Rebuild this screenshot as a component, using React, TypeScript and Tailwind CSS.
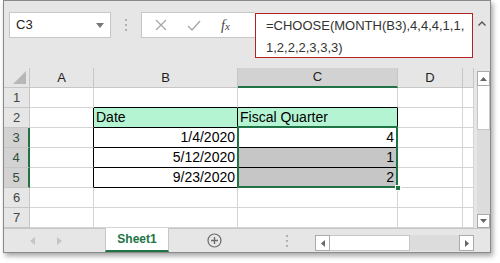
import React from "react";

const F = { fontFamily: '"Liberation Sans", Arial, sans-serif' };

function Corner() {
  return (
    <div className="w-[26px] h-full border-r border-b border-[#c6c6c6] bg-[#e6e6e6] relative flex items-end justify-end pr-[3px] pb-[3px]">
      <svg width="13" height="13" viewBox="0 0 13 13">
        <polygon points="13,0 13,13 0,13" fill="#b7b7b7" />
      </svg>
    </div>
  );
}

const colW = ["w-[64px]", "w-[144px]", "w-[160px]", "w-[65px]", "w-[11px]"];

function ColHeader() {
  const labels = ["A", "B", "C", "D", ""];
  return (
    <div className="flex h-[20px]">
      <Corner />
      {labels.map((l, i) => (
        <div
          key={i}
          className={`${colW[i]} h-full flex items-center justify-center text-[13px] text-[#222] border-r border-[#c6c6c6] ${
            i === 2 ? "bg-[#d2d2d2] border-b-2 border-b-[#217346]" : "bg-[#e6e6e6] border-b border-b-[#c6c6c6]"
          }`}
        >
          {l}
        </div>
      ))}
    </div>
  );
}

type Row = {
  n: number;
  b?: string;
  c?: string;
  hdr?: boolean;
  sel?: boolean;
  gray?: boolean;
};

const rows: Row[] = [
  { n: 1 },
  { n: 2, b: "Date", c: "Fiscal Quarter", hdr: true },
  { n: 3, b: "1/4/2020", c: "4", sel: true },
  { n: 4, b: "5/12/2020", c: "1", sel: true, gray: true },
  { n: 5, b: "9/23/2020", c: "2", sel: true, gray: true },
  { n: 6 },
  { n: 7 },
];

function GridRow({ r }: { r: Row }) {
  const inTable = r.n >= 2 && r.n <= 5;
  const aboveTable = r.n === 1;
  const grid = "border-[#d4d4d4]";
  return (
    <div className="flex h-[20px]">
      <div
        className={`w-[26px] h-full flex items-center justify-center text-[13px] border-b border-[#c6c6c6] ${
          r.sel
            ? "bg-[#d2d2d2] text-[#2f4f3a] border-r-2 border-r-[#217346]"
            : "bg-[#e6e6e6] text-[#444] border-r border-r-[#c6c6c6]"
        }`}
      >
        {r.n}
      </div>
      {/* A */}
      <div
        className={`w-[64px] h-full bg-white border-b ${grid} border-r ${
          inTable ? "border-r-black" : "border-r-[#d4d4d4]"
        }`}
      />
      {/* B */}
      <div
        className={`w-[144px] h-full flex items-center text-[14px] text-black border-r border-b ${
          inTable ? "border-black" : aboveTable ? "border-r-[#d4d4d4] border-b-black" : grid
        } ${r.hdr ? "bg-[#b4f4d2] justify-start pl-[2px]" : "bg-white justify-end pr-[2px]"}`}
      >
        {r.b}
      </div>
      {/* C */}
      <div
        className={`w-[160px] h-full flex items-center text-[14px] text-black border-r border-b ${
          inTable ? "border-black" : aboveTable ? "border-r-[#d4d4d4] border-b-black" : grid
        } ${
          r.hdr
            ? "bg-[#b4f4d2] justify-start pl-[2px]"
            : r.gray
            ? "bg-[#c6c6c6] justify-end pr-[3px]"
            : "bg-white justify-end pr-[3px]"
        }`}
      >
        {r.c}
      </div>
      <div className={`w-[65px] h-full bg-white border-r border-b ${grid}`} />
      <div className={`w-[11px] h-full bg-white border-r border-b ${grid}`} />
    </div>
  );
}

function VScroll() {
  return (
    <div className="w-[13px] h-full flex flex-col pt-[3px]">
      <div className="h-[15px] bg-white border border-[#ababab] flex items-center justify-center">
        <svg width="7" height="4" viewBox="0 0 7 4">
          <polygon points="0,4 3.5,0 7,4" fill="#666" />
        </svg>
      </div>
      <div className="h-[44px] bg-white border-x border-b border-[#c6c6c6]" />
      <div className="flex-1 bg-[#dcdcdc]" />
      <div className="h-[14px] bg-white border border-[#ababab] flex items-center justify-center">
        <svg width="7" height="4" viewBox="0 0 7 4">
          <polygon points="0,0 7,0 3.5,4" fill="#666" />
        </svg>
      </div>
    </div>
  );
}

export default function App() {
  return (
    <div className="w-[500px] h-[263px] bg-white pl-[3px]" style={F}>
      <div className="w-[488px] h-[253px] border border-[#8a8a8a] bg-[#e6e6e6] flex flex-col shadow-[2px_3px_5px_rgba(0,0,0,0.35)]">
        {/* Formula bar */}
        <div className="h-[67px] flex items-start pt-[11px] pl-[5px]">
          <div className="w-[102px] h-[26px] bg-white border border-[#c6c6c6] flex items-center justify-between pl-[6px] pr-[6px] text-[13px] text-[#222]">
            <span>C3</span>
            <svg width="8" height="5" viewBox="0 0 8 5">
              <polygon points="0,0 8,0 4,5" fill="#777" />
            </svg>
          </div>
          <div className="w-[30px] h-[26px] flex flex-col items-center justify-center gap-[3px]">
            <div className="w-[2px] h-[2px] bg-[#b0b0b0]" />
            <div className="w-[2px] h-[2px] bg-[#b0b0b0]" />
            <div className="w-[2px] h-[2px] bg-[#b0b0b0]" />
          </div>
          <div className="w-[114px] h-[26px] bg-white border border-r-0 border-[#c6c6c6] flex items-center pl-[13px]">
            <svg width="12" height="12" viewBox="0 0 12 12">
              <path d="M1 1 L11 11 M11 1 L1 11" stroke="#a8a8a8" strokeWidth="1.3" />
            </svg>
            <svg className="ml-[20px]" width="14" height="11" viewBox="0 0 14 11">
              <path d="M1 6 L5 10 L13 1" stroke="#a8a8a8" strokeWidth="1.4" fill="none" />
            </svg>
            <span
              className="ml-[20px] text-[14px] italic text-[#444]"
              style={{ fontFamily: '"Liberation Serif", "Times New Roman", serif' }}
            >
              f<span className="text-[11px]">x</span>
            </span>
          </div>
          <div className="w-[218px] h-[45px] mt-[1px] bg-white border border-[#b22222] pl-[10px] pt-[1px] text-[13px] leading-[22px] text-[#333]">
            <div>=CHOOSE(MONTH(B3),4,4,4,1,1,</div>
            <div>1,2,2,2,3,3,3)</div>
          </div>
          <div className="flex-1 flex justify-center pt-[9px]">
            <svg width="8" height="5" viewBox="0 0 8 5">
              <path d="M0.5 4.5 L4 1 L7.5 4.5" stroke="#555" strokeWidth="1.4" fill="none" />
            </svg>
          </div>
        </div>

        {/* Grid */}
        <div className="h-[160px] flex">
          <div className="relative flex flex-col">
            <ColHeader />
            {rows.map((r) => (
              <GridRow key={r.n} r={r} />
            ))}
            {/* selection */}
            <div className="absolute left-[233px] top-[58px] w-[161px] h-[62px] border-2 border-[#217346] pointer-events-none" />
            <div className="absolute left-[391px] top-[117px] w-[6px] h-[6px] bg-[#217346] border border-white" />
          </div>
          <div className="w-[16px] h-full flex justify-end">
            <VScroll />
          </div>
        </div>

        {/* Tab bar */}
        <div className="h-[24px] flex border-t border-[#c6c6c6]">
          <div className="w-[101px] flex items-center pl-[26px] gap-[22px]">
            <svg width="5" height="8" viewBox="0 0 5 8">
              <polygon points="5,0 5,8 0,4" fill="#c4c4c4" />
            </svg>
            <svg width="5" height="8" viewBox="0 0 5 8">
              <polygon points="0,0 0,8 5,4" fill="#c4c4c4" />
            </svg>
          </div>
          <div className="w-[64px] -mt-px bg-white border-x border-[#c6c6c6] border-b-2 border-b-[#217346] flex items-center justify-center text-[12px] font-bold text-[#217346]">
            Sheet1
          </div>
          <div className="w-[90px] flex items-center justify-center">
            <svg width="15" height="15" viewBox="0 0 15 15">
              <circle cx="7.5" cy="7.5" r="6.5" stroke="#6a6a6a" strokeWidth="1.2" fill="none" />
              <path d="M7.5 4 V11 M4 7.5 H11" stroke="#6a6a6a" strokeWidth="1.3" />
            </svg>
          </div>
          <div className="w-[56px] flex flex-col items-center justify-center gap-[3px]">
            <div className="w-[2px] h-[2px] bg-[#b0b0b0]" />
            <div className="w-[2px] h-[2px] bg-[#b0b0b0]" />
            <div className="w-[2px] h-[2px] bg-[#b0b0b0]" />
          </div>
          <div className="w-[159px] h-[16px] mt-[6px] flex">
            <div className="w-[15px] h-full bg-white border border-[#ababab] flex items-center justify-center">
              <svg width="4" height="7" viewBox="0 0 4 7">
                <polygon points="4,0 4,7 0,3.5" fill="#666" />
              </svg>
            </div>
            <div className="w-[80px] h-full bg-white border-y border-r border-[#c6c6c6]" />
            <div className="flex-1 h-full bg-[#dcdcdc]" />
            <div className="w-[15px] h-full bg-white border border-[#ababab] flex items-center justify-center">
              <svg width="4" height="7" viewBox="0 0 4 7">
                <polygon points="0,0 0,7 4,3.5" fill="#666" />
              </svg>
            </div>
          </div>
        </div>
      </div>
    </div>
  );
}
